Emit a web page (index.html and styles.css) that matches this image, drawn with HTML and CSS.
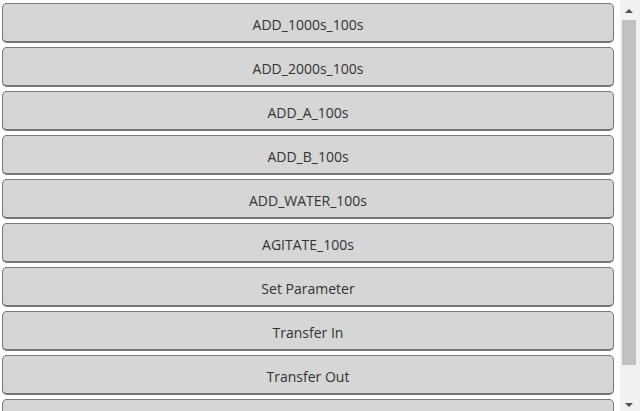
FILE: index.html
```html
<!DOCTYPE html>
<html lang="en">
<head>
  <meta charset="UTF-8">
  <meta name="viewport" content="width=device-width, initial-scale=1.0">
  <title>Operations</title>
  <link rel="stylesheet" href="styles.css">
</head>
<body>
  <div class="op-list">
    <button class="op-btn">ADD_1000s_100s</button>
    <button class="op-btn">ADD_2000s_100s</button>
    <button class="op-btn">ADD_A_100s</button>
    <button class="op-btn">ADD_B_100s</button>
    <button class="op-btn">ADD_WATER_100s</button>
    <button class="op-btn">AGITATE_100s</button>
    <button class="op-btn">Set Parameter</button>
    <button class="op-btn">Transfer In</button>
    <button class="op-btn">Transfer Out</button>
    <button class="op-btn">Wait</button>
  </div>
  <div class="scrollbar">
    <div class="sb-arrow"><span class="tri-up"></span></div>
    <div class="sb-track"><div class="sb-thumb"></div></div>
    <div class="sb-arrow"><span class="tri-down"></span></div>
  </div>
</body>
</html>
```

FILE: styles.css
```css
html, body {
  height: 100%;
}
body {
  margin: 0;
  display: flex;
  overflow: hidden;
  background: #ffffff;
  font-family: "Open Sans", "Noto Sans", sans-serif;
}
.op-list {
  flex: 1;
  display: flex;
  flex-direction: column;
  gap: 4px;
  padding: 3px 6px 10px 2px;
  overflow: hidden;
}
.op-btn {
  flex: none;
  height: 40px;
  width: 100%;
  padding: 3px 0 0;
  background: #d6d6d6;
  border: 1px solid #777777;
  border-bottom-width: 2px;
  border-radius: 5px;
  color: #333333;
  font-family: inherit;
  font-size: 14px;
  cursor: pointer;
}
.op-btn:hover {
  background: #cccccc;
}
.scrollbar {
  width: 20px;
  flex: none;
  display: flex;
  flex-direction: column;
  background: #f1f1f1;
}
.sb-arrow {
  height: 17px;
  display: flex;
  align-items: center;
  justify-content: center;
  padding-right: 2px;
}
.sb-track {
  flex: 1;
  padding: 3px 4px 0 2px;
}
.sb-thumb {
  height: 345px;
  background: #c1c1c1;
}
.tri-up, .tri-down {
  width: 0;
  height: 0;
  border-left: 4px solid transparent;
  border-right: 4px solid transparent;
}
.tri-up {
  border-bottom: 4px solid #505050;
  margin-top: 5px;
}
.tri-down {
  border-top: 4px solid #505050;
  margin-top: 4px;
}
```
